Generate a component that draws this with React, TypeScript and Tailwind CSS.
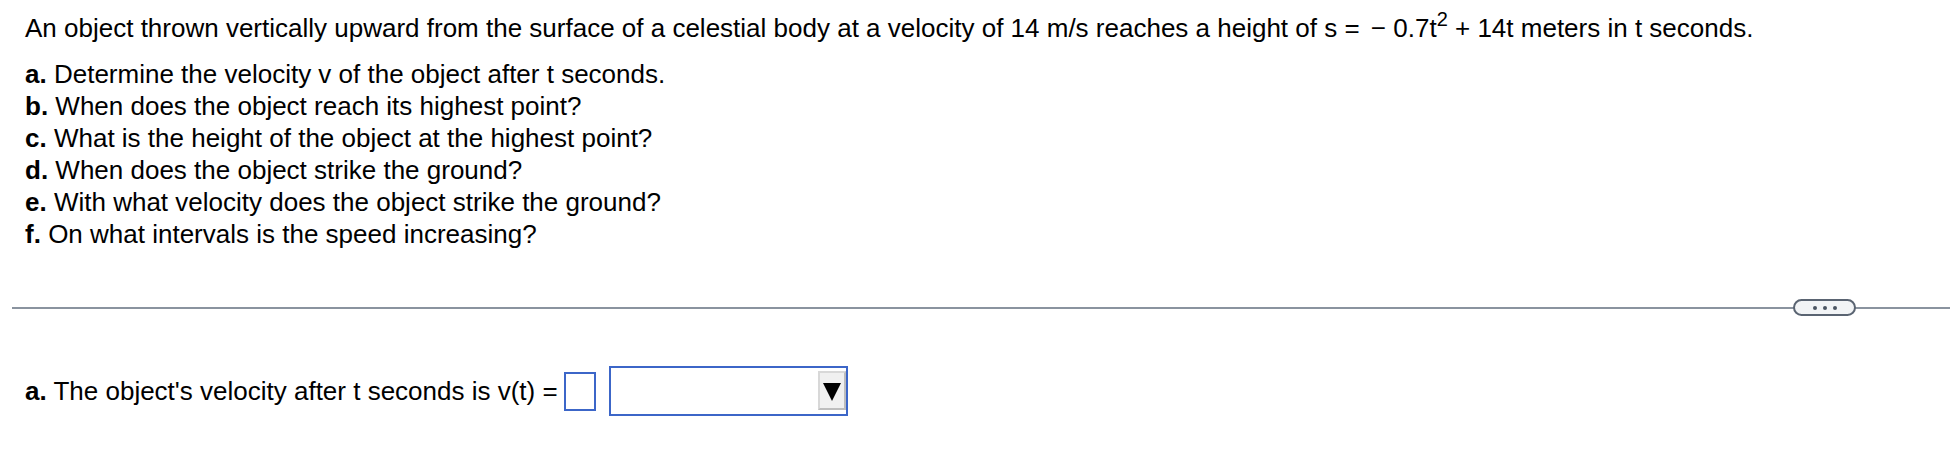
import React from "react";

const questions: [string, string][] = [
  ["a.", "Determine the velocity v of the object after t seconds."],
  ["b.", "When does the object reach its highest point?"],
  ["c.", "What is the height of the object at the highest point?"],
  ["d.", "When does the object strike the ground?"],
  ["e.", "With what velocity does the object strike the ground?"],
  ["f.", "On what intervals is the speed increasing?"],
];

export default function App() {
  return (
    <div
      className="w-[1950px] h-[472px] bg-white text-black text-[26px] leading-[32px] overflow-hidden"
      style={{ fontFamily: '"Liberation Sans", Arial, sans-serif' }}
    >
      <div className="pl-[25px] pt-[12px]">
        <p>
          An object thrown vertically upward from the surface of a celestial body at a velocity of 14 m/s reaches a height of s ={" "}
          <span className="ml-[4px]">−</span> 0.7t
          <span className="text-[20px] relative top-[-11px] align-baseline leading-none">2</span> + 14t meters in t seconds.
        </p>
        <div className="mt-[14px]">
          {questions.map(([l, q]) => (
            <p key={l}>
              <span className="font-bold">{l}</span> {q}
            </p>
          ))}
        </div>
      </div>

      <div className="relative mt-[49px] h-[17px] flex items-center ml-[12px]">
        <div className="h-[2px] w-full bg-[#8a939f]" />
        <div className="absolute right-[94px] top-0 h-[17px] w-[63px] rounded-full border-2 border-[#5a6472] bg-[#f2f4f6] flex items-center justify-center gap-[6px]">
          <span className="w-[4px] h-[4px] rounded-full bg-[#4b5563]" />
          <span className="w-[4px] h-[4px] rounded-full bg-[#4b5563]" />
          <span className="w-[4px] h-[4px] rounded-full bg-[#4b5563]" />
        </div>
      </div>

      <div className="mt-[50px] pl-[25px] flex items-center h-[50px]">
        <span>
          <span className="font-bold">a.</span> The object's velocity after t seconds is v(t) =
        </span>
        <div className="ml-[6px] w-[32px] h-[39px] border-2 border-[#3c66c8] bg-white" />
        <div className="ml-[13px] w-[239px] h-[50px] border-2 border-[#3c66c8] bg-white flex justify-end items-start pt-[3px]">
          <div className="w-[28px] h-[39px] bg-[#f0f0f0] border-2 border-t-[#d8d8d8] border-l-[#d8d8d8] border-r-[#bdbdbd] border-b-[#bdbdbd] flex items-center justify-center">
            <svg width="18" height="20" viewBox="0 0 18 20">
              <polygon points="0,2 18,2 9,20" fill="#000" />
            </svg>
          </div>
        </div>
      </div>
    </div>
  );
}
